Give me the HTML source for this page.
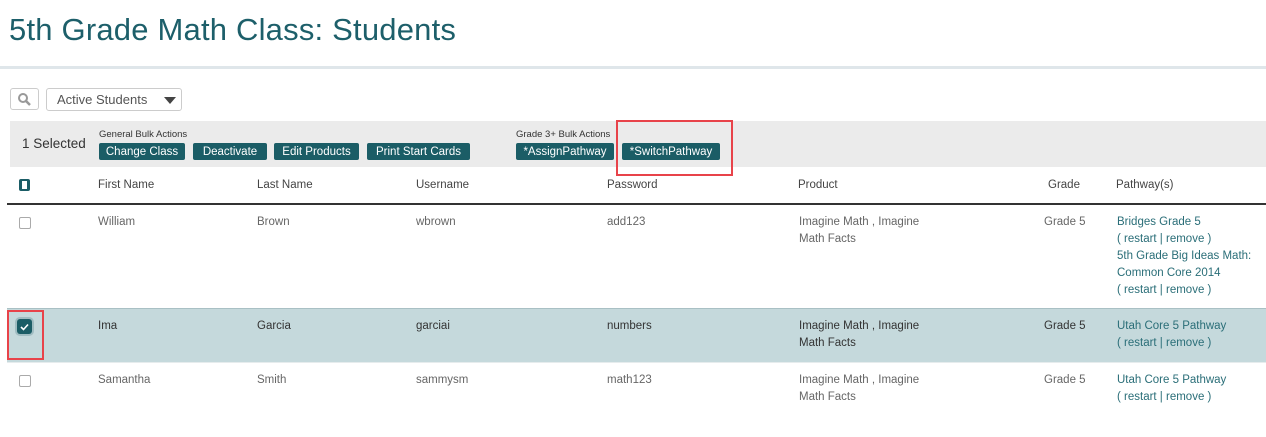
<!DOCTYPE html>
<html><head><style>
body{margin:0;width:1266px;height:437px;background:#fff;font-family:"Liberation Sans",sans-serif;position:relative;overflow:hidden;color:#555}
.a{position:absolute;white-space:nowrap}
h1{position:absolute;left:9px;top:12px;margin:0;font-weight:normal;font-size:31px;color:#1d5f6a;letter-spacing:0.2px}
.btn{position:absolute;top:143px;height:17px;background:#1b5d66;color:#fff;font-size:11.5px;line-height:18px;text-align:center;border-radius:2px}
.lbl{position:absolute;top:129px;font-size:9.5px;color:#333}
.th{position:absolute;top:179px;font-size:11.5px;color:#444}
.td{position:absolute;font-size:11.5px;line-height:17px;color:#666}
.sel .td{color:#333}
.pw{color:#2a6e78}
.cb{position:absolute;left:19px;width:10px;height:10px;border:1px solid #aaa;border-radius:2px;background:#fff}
</style></head><body>
<h1>5th Grade Math Class: Students</h1>
<div class="a" style="left:0;top:66px;width:1266px;height:3px;background:#dfe6ea"></div>
<div class="a" style="left:10px;top:88px;width:29px;height:22px;border:1px solid #ccc;border-radius:3px;box-sizing:border-box">
<svg width="29" height="22" style="position:absolute;left:-1px;top:-1px"><circle cx="13" cy="10" r="4" fill="none" stroke="#999" stroke-width="2"/><path d="M16 13l4 4" stroke="#999" stroke-width="2.5"/></svg></div>
<div class="a" style="left:46px;top:88px;width:136px;height:23px;border:1px solid #ccc;border-radius:3px;box-sizing:border-box;font-size:13px;line-height:21px;padding-left:10px;color:#555">Active Students
<svg width="12" height="8" style="position:absolute;left:117px;top:8px"><path d="M0 0h12L6 7z" fill="#444"/></svg></div>
<div class="a" style="left:10px;top:121px;width:1256px;height:46px;background:#ebebeb"></div>
<div class="a" style="left:22px;top:136px;font-size:13.5px;color:#333">1 Selected</div>
<div class="lbl" style="left:99px">General Bulk Actions</div>
<div class="lbl" style="left:516px">Grade 3+ Bulk Actions</div>
<div class="btn" style="left:99px;width:86px">Change Class</div>
<div class="btn" style="left:193px;width:74px">Deactivate</div>
<div class="btn" style="left:274px;width:85px">Edit Products</div>
<div class="btn" style="left:367px;width:103px">Print Start Cards</div>
<div class="btn" style="left:516px;width:98px">*AssignPathway</div>
<div class="btn" style="left:622px;width:98px">*SwitchPathway</div>
<div class="a" style="left:616px;top:120px;width:113px;height:52px;border:2px solid #e8434a"></div>
<div class="a" style="left:19px;top:179px;width:11px;height:12px;background:#1b5d66;border-radius:2px"><div style="margin:2px 3px;width:5px;height:8px;background:#fff"></div></div>
<div class="th" style="left:98px">First Name</div>
<div class="th" style="left:257px">Last Name</div>
<div class="th" style="left:416px">Username</div>
<div class="th" style="left:607px">Password</div>
<div class="th" style="left:798px">Product</div>
<div class="th" style="left:1048px">Grade</div>
<div class="th" style="left:1116px">Pathway(s)</div>
<div class="a" style="left:7px;top:203px;width:1259px;height:2px;background:#333"></div>
<div class="cb" style="top:217px"></div>
<div class="td" style="left:98px;top:214px">William</div>
<div class="td" style="left:257px;top:214px">Brown</div>
<div class="td" style="left:416px;top:214px">wbrown</div>
<div class="td" style="left:607px;top:214px">add123</div>
<div class="td" style="left:799px;top:214px">Imagine Math , Imagine<br>Math Facts</div>
<div class="td" style="left:1044px;top:214px">Grade 5</div>
<div class="td pw" style="left:1117px;top:214px">Bridges Grade 5<br>( restart | remove )<br>5th Grade Big Ideas Math:<br>Common Core 2014<br>( restart | remove )</div>
<div class="a" style="left:7px;top:308px;width:1259px;height:54px;background:#c5d9dc;border-top:1px solid #a9c0c4"></div>
<div class="sel">
<div class="a" style="left:17px;top:319px;width:15px;height:15px;background:#1b5d66;border-radius:3px;box-shadow:0 0 0 2px #9fbcc1"><svg width="15" height="15"><path d="M4 8l2.5 2.5L11 5.5" stroke="#fff" stroke-width="1.6" fill="none"/></svg></div>
<div class="a" style="left:7px;top:310px;width:33px;height:46px;border:2px solid #e8434a"></div>
<div class="td" style="left:98px;top:318px">Ima</div>
<div class="td" style="left:257px;top:318px">Garcia</div>
<div class="td" style="left:416px;top:318px">garciai</div>
<div class="td" style="left:607px;top:318px">numbers</div>
<div class="td" style="left:799px;top:318px">Imagine Math , Imagine<br>Math Facts</div>
<div class="td" style="left:1044px;top:318px">Grade 5</div>
<div class="td pw" style="left:1117px;top:318px;color:#2a6e78">Utah Core 5 Pathway<br>( restart | remove )</div>
</div>
<div class="a" style="left:7px;top:362px;width:1259px;height:1px;background:#e6eced"></div>
<div class="cb" style="top:375px"></div>
<div class="td" style="left:98px;top:372px">Samantha</div>
<div class="td" style="left:257px;top:372px">Smith</div>
<div class="td" style="left:416px;top:372px">sammysm</div>
<div class="td" style="left:607px;top:372px">math123</div>
<div class="td" style="left:799px;top:372px">Imagine Math , Imagine<br>Math Facts</div>
<div class="td" style="left:1044px;top:372px">Grade 5</div>
<div class="td pw" style="left:1117px;top:372px">Utah Core 5 Pathway<br>( restart | remove )</div>
</body></html>
